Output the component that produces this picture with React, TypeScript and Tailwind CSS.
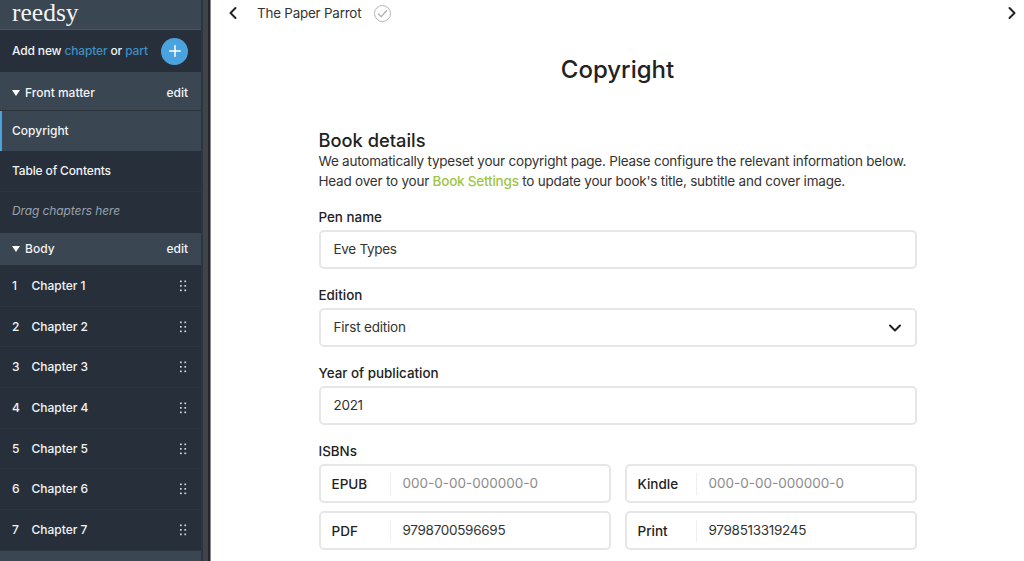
import { ChevronDown, ChevronLeft, ChevronRight, Plus } from "lucide-react";

const sans = "font-['Inter','Noto_Sans',sans-serif]";
const chapters = [1, 2, 3, 4, 5, 6, 7];

function Grip() {
  return (
    <svg width="8" height="12" viewBox="0 0 8 12" className="text-gray-300" fill="currentColor">
      <rect x="1" y="0.5" width="1.7" height="1.7" />
      <rect x="5.4" y="0.5" width="1.7" height="1.7" />
      <rect x="1" y="5" width="1.7" height="1.7" />
      <rect x="5.4" y="5" width="1.7" height="1.7" />
      <rect x="1" y="9.5" width="1.7" height="1.7" />
      <rect x="5.4" y="9.5" width="1.7" height="1.7" />
    </svg>
  );
}

function SectionHeader({ title, className }: { title: string; className: string }) {
  return (
    <div className={`flex items-center justify-between pl-3 pr-[13px] bg-[#3a4651] border-b border-[#2a323a] ${className}`}>
      <div className="flex items-center">
        <span className="w-0 h-0 mr-[5px] border-l-[4px] border-r-[4px] border-t-[6px] border-l-transparent border-r-transparent border-t-white" />
        <span className="text-[12px] font-medium text-gray-100">{title}</span>
      </div>
      <span className="text-[12px] font-medium text-gray-100">edit</span>
    </div>
  );
}

function Label({ children }: { children: string }) {
  return <div className="text-[13.4px] font-medium leading-[17px] text-[#222] mb-[4px]">{children}</div>;
}

function Field({ label, value, className }: { label: string; value: string; className?: string }) {
  return (
    <div className={className}>
      <Label>{label}</Label>
      <div className="h-[39px] flex items-center px-[13px] border-2 border-[#e6e6e6] rounded-[5px] text-[13.5px] tracking-[-0.3px] text-[#333]">
        {value}
      </div>
    </div>
  );
}

function Isbn({ label, value, empty }: { label: string; value: string; empty?: boolean }) {
  return (
    <div className="h-[39px] flex items-center border-2 border-[#e6e6e6] rounded-[5px] text-[13.5px]">
      <div className="w-[70px] pl-[11px] font-medium text-[#222] border-r border-[#eeeeee] leading-[22px]">{label}</div>
      <div className={`pl-[12px] ${empty ? "text-[#8c8c8c]" : "tracking-[-0.3px] text-[#333]"}`}>{value}</div>
    </div>
  );
}

export default function App() {
  return (
    <div className={`w-[1024px] h-[561px] overflow-hidden flex bg-white ${sans}`}>
      <aside className="w-[201px] h-full shrink-0 bg-[#27303a] overflow-hidden">
        <div className="h-[30px] bg-[#3a4651] pl-3 flex items-end border-b border-[#4a5560]">
          <span className="font-['Liberation_Serif',serif] text-[25.5px] leading-[26px] mb-[3px] text-gray-100">reedsy</span>
        </div>
        <div className="h-[42px] flex items-center justify-between pl-3 pr-[13px] bg-[#27303a]">
          <span className="text-[12px] tracking-[-0.15px] font-medium text-gray-100">
            Add new <span className="text-[#3f8fc4]">chapter</span> or <span className="text-[#3f8fc4]">part</span>
          </span>
          <span className="w-[27px] h-[27px] rounded-full bg-[#4aa3df] flex items-center justify-center">
            <Plus size={18} strokeWidth={2} className="text-white" />
          </span>
        </div>
        <SectionHeader title="Front matter" className="h-[39px] pt-[4px]" />
        <div className="h-[40px] flex items-center pl-3 bg-[#3a4651] border-l-2 border-[#4aa3df] text-[12px] font-medium text-gray-100">
          <span className="-ml-[2px]">Copyright</span>
        </div>
        <div className="h-[41px] flex items-center pl-3 border-b border-[#2e3740] text-[12px] tracking-[-0.15px] font-medium text-gray-100">
          Table of Contents
        </div>
        <div className="h-[41px] flex items-center pl-3 pb-[3px] text-[12px] tracking-[-0.1px] italic text-gray-400">Drag chapters here</div>
        <SectionHeader title="Body" className="h-[33px]" />
        {chapters.map((n) => (
          <div key={n} className="h-[40.7px] flex items-center pl-3 pr-[14px] border-b border-[#2e3740] text-[12px] font-medium text-gray-100">
            <span className="w-[19.5px]">{n}</span>
            <span className="flex-1">Chapter {n}</span>
            <Grip />
          </div>
        ))}
        <div className="h-[40px] bg-[#3a4651]" />
      </aside>
      <div className="w-[10px] h-full shrink-0 flex">
        <div className="w-[2px] bg-[#2c353e]" />
        <div className="w-[5px] bg-[#3f4448]" />
        <div className="w-[2px] bg-[#24282c]" />
        <div className="w-[1px] bg-[#8a8a8a]" />
      </div>
      <main className="flex-1 min-w-0 text-[#222]">
        <div className="h-[26px] flex items-center pl-[12px] pr-[2px]">
          <ChevronLeft size={20} strokeWidth={2.4} className="text-[#222]" />
          <span className="ml-[14px] text-[13.4px] tracking-[-0.2px] text-[#333]">The Paper Parrot</span>
          <span className="ml-[13px] w-[17px] h-[17px] rounded-full border border-[#b5b5b5] flex items-center justify-center">
            <svg width="11" height="9" viewBox="0 0 10 8" fill="none" stroke="#b5b5b5" strokeWidth="1.3">
              <path d="M1 4l2.8 3L9 1" />
            </svg>
          </span>
          <ChevronRight size={20} strokeWidth={2.4} className="ml-auto text-[#222]" />
        </div>
        <h1 className="mt-[27px] text-center text-[24px] font-medium leading-[34px] text-[#222]">Copyright</h1>
        <div className="w-[598px] mx-auto mt-[40px]">
          <h2 className="text-[18.3px] font-medium leading-[26px] text-[#222]">Book details</h2>
          <p className="text-[13.5px] tracking-[-0.22px] leading-[20px] text-[#333] mt-[-2px] whitespace-nowrap">
            We automatically typeset your copyright page. Please configure the relevant information below.
            <br />
            Head over to your <span className="font-medium text-[#a0c545]">Book Settings</span> to update your book's title, subtitle and cover image.
          </p>
          <Field label="Pen name" value="Eve Types" className="mt-[18px]" />
          <div className="mt-[18px]">
            <Label>Edition</Label>
            <div className="h-[39px] flex items-center justify-between pl-[13px] pr-[10px] border-2 border-[#e6e6e6] rounded-[5px] text-[13.5px] tracking-[-0.2px] text-[#333]">
              First edition
              <ChevronDown size={20} strokeWidth={2.4} className="text-[#222]" />
            </div>
          </div>
          <Field label="Year of publication" value="2021" className="mt-[18px]" />
          <div className="mt-[18px]">
            <Label>ISBNs</Label>
            <div className="grid grid-cols-2 gap-x-[14px] gap-y-[8px]">
              <Isbn label="EPUB" value="000-0-00-000000-0" empty />
              <Isbn label="Kindle" value="000-0-00-000000-0" empty />
              <Isbn label="PDF" value="9798700596695" />
              <Isbn label="Print" value="9798513319245" />
            </div>
          </div>
        </div>
      </main>
    </div>
  );
}
